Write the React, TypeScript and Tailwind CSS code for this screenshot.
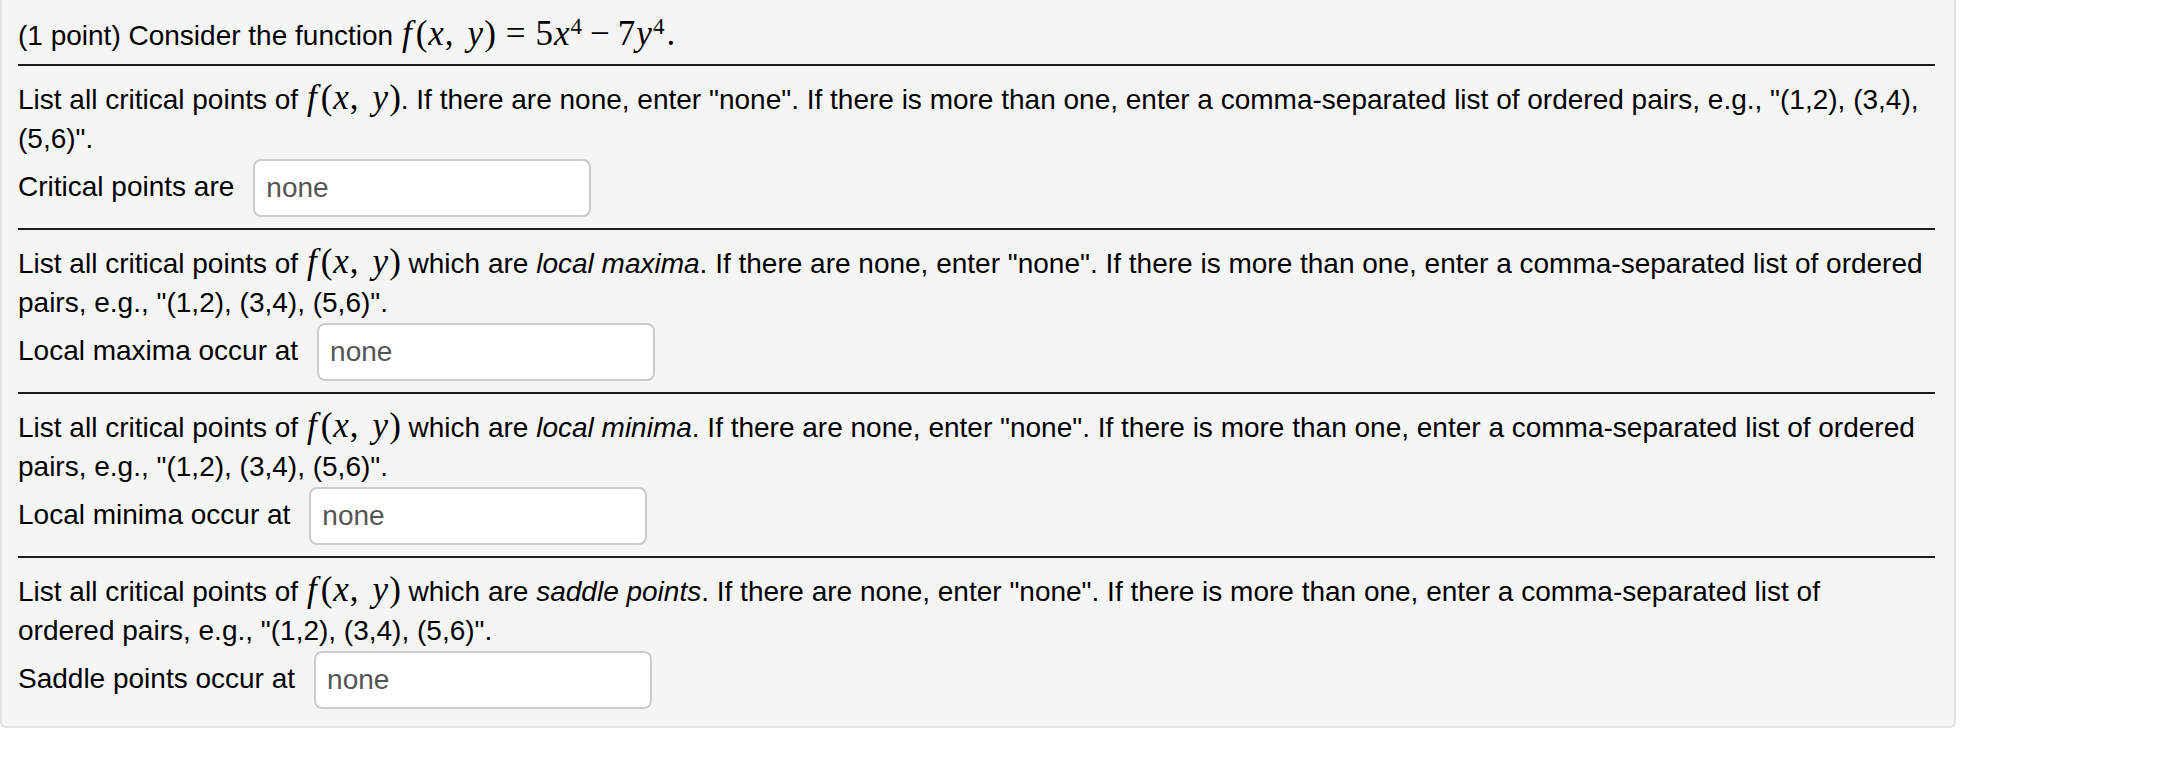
import React from "react";

const serif = '"Liberation Serif", "DejaVu Serif", serif';

const M = ({ children }: { children: React.ReactNode }) => (
  <span className="text-[35px] leading-[0.9]" style={{ fontFamily: serif }}>
    {children}
  </span>
);

const I = ({ children }: { children: React.ReactNode }) => <span className="italic">{children}</span>;

const FxyInner = () => (
  <>
    <span className="italic ml-[1px] mr-[4px]" style={{ fontFamily: serif }}>f</span>(
    <span className="italic px-[1px]" style={{ fontFamily: serif }}>x</span>,<span className="inline-block w-[13px]" />
    <span className="italic px-[1px]" style={{ fontFamily: serif }}>y</span>)
  </>
);

const Fxy = () => (
  <M>
    <FxyInner />
  </M>
);

const Rule = () => <div className="h-[2px] bg-[#1c1c1c]" />;

const Line = ({ children }: { children: React.ReactNode }) => (
  <div className="h-[39px] whitespace-nowrap">{children}</div>
);

const Answer = ({ label }: { label: string }) => (
  <div className="flex items-start gap-[19px] mt-[1px]">
    <span className="mt-[8px] whitespace-nowrap">{label}</span>
    <input
      defaultValue="none"
      readOnly
      className="w-[338px] h-[58px] bg-white border-2 border-[#cccccc] rounded-[8px] px-[11px] text-[28px] text-[#555555] outline-none"
      style={{ fontFamily: '"Liberation Sans", Arial, sans-serif' }}
    />
  </div>
);

const Section = ({ l1, l2, label }: { l1: React.ReactNode; l2: React.ReactNode; label: string }) => (
  <div>
    <Rule />
    <div className="mt-[14px]">
      <Line>{l1}</Line>
      <Line>{l2}</Line>
    </div>
    <Answer label={label} />
  </div>
);

export default function App() {
  return (
    <div className="w-[2172px] h-[760px] bg-white" style={{ fontFamily: '"Liberation Sans", Arial, Helvetica, sans-serif' }}>
      <div className="w-[1956px] bg-[#f5f5f5] border-x-2 border-b-2 border-[#e3e3e3] rounded-b-[6px] pl-[16px] pr-[19px] pt-[16px] pb-[17px] text-[28px] leading-[39px] text-black">
        <Line>
          (1 point) Consider the function{" "}
          <M>
            <FxyInner />
            <span className="inline-block w-[10px]" />=
            <span className="inline-block w-[10px]" />5<span className="italic px-[1px]">x</span>
            <sup className="text-[23px]">4</sup>
            <span className="inline-block w-[8px]" />−<span className="inline-block w-[8px]" />7
            <span className="italic px-[1px]">y</span>
            <sup className="text-[23px]">4</sup>
            <span className="ml-[2px]">.</span>
          </M>
        </Line>
        <div className="flex flex-col gap-[11px] mt-[9px]">
          <Section
            l1={
              <>
                List all critical points of <Fxy />. If there are none, enter "none". If there is more than one, enter a comma-separated list of ordered pairs, e.g., "(1,2), (3,4),
              </>
            }
            l2={<>(5,6)".</>}
            label="Critical points are"
          />
          <Section
            l1={
              <>
                List all critical points of <Fxy /> which are <I>local maxima</I>. If there are none, enter "none". If there is more than one, enter a comma-separated list of ordered
              </>
            }
            l2={<>pairs, e.g., "(1,2), (3,4), (5,6)".</>}
            label="Local maxima occur at"
          />
          <Section
            l1={
              <>
                List all critical points of <Fxy /> which are <I>local minima</I>. If there are none, enter "none". If there is more than one, enter a comma-separated list of ordered
              </>
            }
            l2={<>pairs, e.g., "(1,2), (3,4), (5,6)".</>}
            label="Local minima occur at"
          />
          <Section
            l1={
              <>
                List all critical points of <Fxy /> which are <I>saddle points</I>. If there are none, enter "none". If there is more than one, enter a comma-separated list of
              </>
            }
            l2={<>ordered pairs, e.g., "(1,2), (3,4), (5,6)".</>}
            label="Saddle points occur at"
          />
        </div>
      </div>
    </div>
  );
}
